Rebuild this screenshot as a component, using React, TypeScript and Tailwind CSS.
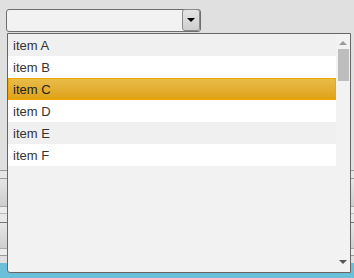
export default function App() {
  const items = ["item A", "item B", "item C", "item D", "item E", "item F"];

  return (
    <div className="relative w-[354px] h-[278px] overflow-hidden bg-[#e0e0e0] font-['Liberation_Sans',Arial,sans-serif]">
      {/* page behind the popup */}
      <div className="flex flex-col h-full">
        <div className="h-[170px] pt-[9px] pl-[6px]">
          <div className="flex justify-end w-[195px] h-[23px] rounded-[3px] border border-[#6e6e6e] bg-[#f2f2f2]">
            <div className="flex items-center justify-center w-[18px] h-[22px] -mt-px rounded-[3px] border border-[#8a8a8a] bg-gradient-to-b from-[#e4e4e4] to-[#cfcfcf]">
              <span className="w-0 h-0 border-x-[4px] border-x-transparent border-t-[4px] border-t-black" />
            </div>
          </div>
        </div>
        <div className="h-px bg-[#9a9a9a]" />
        <div className="h-[7px] bg-[#e6e6e6]" />
        <div className="h-px bg-[#9a9a9a]" />
        <div className="h-[27px] bg-gradient-to-b from-[#e6e6e6] to-[#cdcdcd]" />
        <div className="h-px bg-[#a8a8a8]" />
        <div className="h-[6px] bg-[#ececec]" />
        <div className="h-px bg-[#bbbbbb]" />
        <div className="h-[8px] bg-[#e8e8e8]" />
        <div className="h-px bg-[#777777]" />
        <div className="h-[25px] bg-gradient-to-b from-[#e6e6e6] to-[#cfcfcf]" />
        <div className="h-px bg-[#aaaaaa]" />
        <div className="h-[6px] bg-[#ececec]" />
        <div className="h-px bg-[#999999]" />
        <div className="h-[7px] bg-[#e0e0e0]" />
        <div className="flex-1 bg-[#6bbfd9]" />
      </div>

      {/* dropdown popup */}
      <div className="absolute left-[7px] top-[33px] w-[344px] h-[240px] flex border border-[#666666] rounded-bl-[3px] bg-[#f2f2f2]">
        <ul className="flex-1">
          {items.map((item, i) => {
            const selected = i === 2;
            const row = selected
              ? "pl-[4px] border border-[#f5a500] bg-gradient-to-b from-[#e8bc48] to-[#dfa212] text-[#222222]"
              : i % 2 === 1
                ? "pl-[5px] bg-white text-[#333333]"
                : "pl-[5px] bg-[#f0f0f0] text-[#333333]";
            return (
              <li key={item} className={`h-[22px] flex items-center text-[13px] leading-none ${row}`}>
                {item}
              </li>
            );
          })}
        </ul>
        {/* scrollbar */}
        <div className="w-[14px] flex flex-col items-center pt-[7px] pb-[8px]">
          <span className="w-0 h-0 border-x-[4px] border-x-transparent border-b-[4px] border-b-[#9a9a9a]" />
          <div className="mt-[4px] w-[11px] h-[32px] bg-[#bdbdbd]" />
          <div className="flex-1" />
          <span className="w-0 h-0 border-x-[4px] border-x-transparent border-t-[4px] border-t-[#555555]" />
        </div>
      </div>
    </div>
  );
}
